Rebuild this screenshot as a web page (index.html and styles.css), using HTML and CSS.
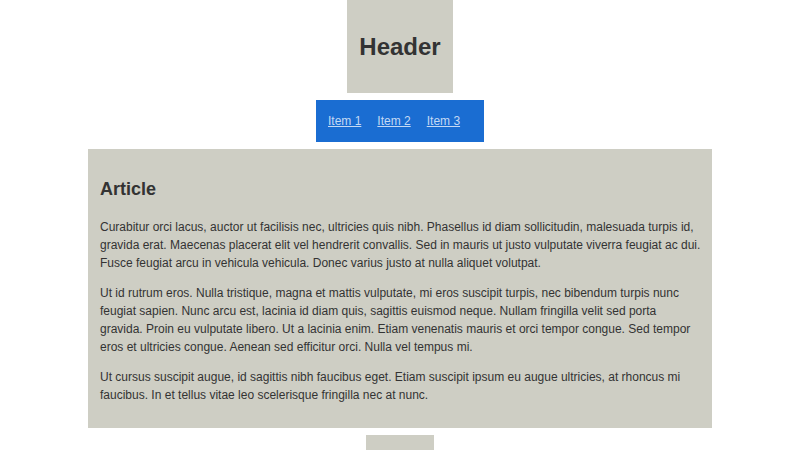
FILE: index.html
```html
<!DOCTYPE html>
<html>
<head>
<meta charset="utf-8">
<link rel="stylesheet" href="styles.css">
</head>
<body>
<div class="page">
  <header class="header"><h1>Header</h1></header>
  <nav class="nav">
    <a href="#">Item 1</a>
    <a href="#">Item 2</a>
    <a href="#">Item 3</a>
  </nav>
  <article class="article">
    <h2>Article</h2>
    <p>Curabitur orci lacus, auctor ut facilisis nec, ultricies quis nibh. Phasellus id diam sollicitudin, malesuada turpis id, gravida erat. Maecenas placerat elit vel hendrerit convallis. Sed in mauris ut justo vulputate viverra feugiat ac dui. Fusce feugiat arcu in vehicula vehicula. Donec varius justo at nulla aliquet volutpat.</p>
    <p>Ut id rutrum eros. Nulla tristique, magna et mattis vulputate, mi eros suscipit turpis, nec bibendum turpis nunc feugiat sapien. Nunc arcu est, lacinia id diam quis, sagittis euismod neque. Nullam fringilla velit sed porta gravida. Proin eu vulputate libero. Ut a lacinia enim. Etiam venenatis mauris et orci tempor congue. Sed tempor eros et ultricies congue. Aenean sed efficitur orci. Nulla vel tempus mi.</p>
    <p>Ut cursus suscipit augue, id sagittis nibh faucibus eget. Etiam suscipit ipsum eu augue ultricies, at rhoncus mi faucibus. In et tellus vitae leo scelerisque fringilla nec at nunc.</p>
  </article>
  <footer class="footer"></footer>
</div>
</body>
</html>
```
FILE: styles.css
```css
html, body {
  margin: 0;
  padding: 0;
  background: #ffffff;
}
body {
  font-family: "Liberation Sans", Arial, sans-serif;
  font-size: 12px;
  line-height: 1.5;
  color: #333333;
}
.page {
  display: flex;
  flex-direction: column;
  align-items: center;
  gap: 7px;
}
.header {
  background: #cecec4;
  width: 106px;
  height: 93px;
  display: flex;
  align-items: center;
  justify-content: center;
}
.header h1 {
  margin: 0;
  font-size: 24px;
  line-height: 1.5;
  font-weight: bold;
  color: #333333;
}
.nav {
  background: #1a6dd2;
  width: 168px;
  height: 42px;
  box-sizing: border-box;
  padding: 0 12px;
  display: flex;
  align-items: center;
  gap: 16px;
}
.nav a {
  color: #c4d9f4;
  font-size: 12px;
  text-decoration: underline;
}
.article {
  background: #cecec4;
  width: 624px;
  box-sizing: border-box;
  padding: 12px 10px 12px 12px;
}
.article h2 {
  font-size: 18px;
  line-height: 1.5;
  margin: 15px 0;
}
.article p {
  font-size: 12px;
  line-height: 18px;
  margin: 12px 0;
}
.footer {
  background: #cecec4;
  width: 68px;
  height: 30px;
}
```
